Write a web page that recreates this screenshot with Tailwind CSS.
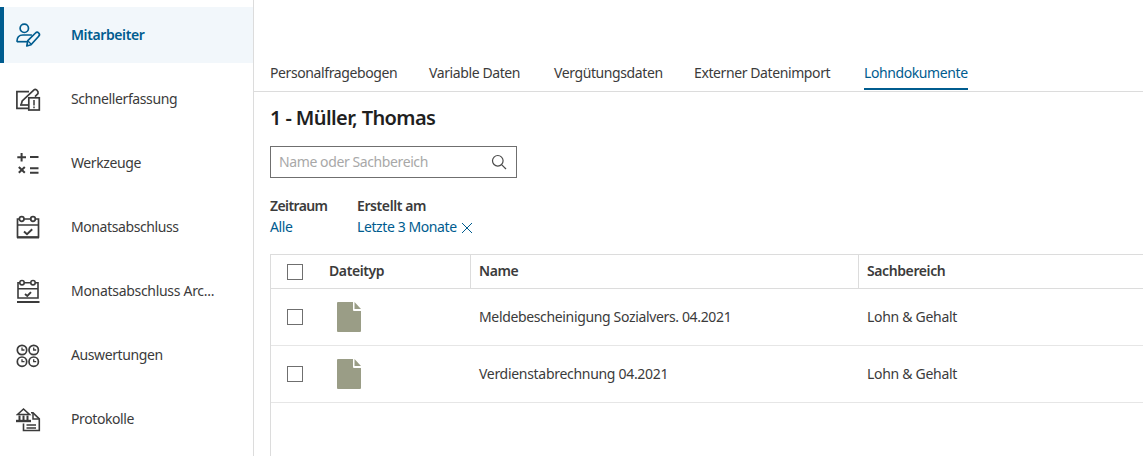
<!DOCTYPE html>
<html lang="de">
<head>
    <meta charset="UTF-8">
    <title>Lohndokumente</title>
    <script src="https://cdn.jsdelivr.net/npm/@tailwindcss/browser@4"></script>
</head>
<body class="bg-white overflow-hidden">
<div class="flex h-[456px] w-[1143px] overflow-hidden font-['Noto_Sans',sans-serif] text-[14px] tracking-[-0.4px] text-[#3b3b3b]">
    <!-- sidebar -->
    <nav class="w-[254px] shrink-0 border-r border-[#dcdcdc] pt-[7px] flex flex-col gap-2">
        <a class="h-14 shrink-0 flex items-center bg-[#f2f7fb] border-l-4 border-[#005c8f] pl-[12px] font-semibold text-[#005c8f]">
            <svg class="w-7 h-7 mr-[27px]" viewBox="0 0 28 28" fill="none" stroke="#005c8f" stroke-width="1.7"><circle cx="8.300" cy="7.300" r="4.200"/><path d="M.9 20.700c0-4 2-6.700 6-6.700h9"/><path d="M.9 20.700h10.500"/><path d="M10.800 25l1-5.300 7.700-7.700c1-1 2.200-1 3.200 0s1 2.200 0 3.200L15 23.800z" stroke-linejoin="round"/><path d="M12 20l3 3" stroke-width="1.200"/></svg>
            <span class="mb-[2px]">Mitarbeiter</span>
        </a>
        <a class="h-14 shrink-0 flex items-center pl-4">
            <svg class="w-7 h-7 mr-[27px]" viewBox="0 0 28 28" fill="none" stroke="#3b3b3b" stroke-width="1.700"><path d="M13 6.700H.9v16.600h11.400"/><path d="M5.200 19.500l1-3.500L18 4.800c1.500-1.300 4.800.8 4 3.800l-3 3"/><path d="M4 20h8.300"/><rect x="12.800" y="12.800" width="10.500" height="12.200"/><path d="M18 15v5.500M18 21.500v1.800" stroke-width="1.500"/></svg>
            <span class="mb-[2px]">Schnellerfassung</span>
        </a>
        <a class="h-14 shrink-0 flex items-center pl-4">
            <svg class="w-7 h-7 mr-[27px]" viewBox="0 0 28 28" fill="none" stroke="#3b3b3b" stroke-width="2"><path d="M5.600 4v8.600M1.300 8.300H10M14 8h8.500M2.800 18l6 5.800M8.800 18l-6 5.800M14 19.300h8.500M14 23.700h8.500"/></svg>
            <span class="mb-[2px]">Werkzeuge</span>
        </a>
        <a class="h-14 shrink-0 flex items-center pl-4">
            <svg class="w-7 h-7 mr-[27px]" viewBox="0 0 28 28" fill="none" stroke="#3b3b3b" stroke-width="1.700"><path d="M3.400 6H1.500v18h21V6h-3M8 6h7.400M1.500 12h21"/><circle cx="5.700" cy="6" r="2.300"/><circle cx="17" cy="6" r="2.300"/><path d="M8 18.500l3 2.800 5.200-5" stroke-width="1.900"/><path d="M1 24.500h22" stroke-width="2"/></svg>
            <span class="mb-[2px]">Monatsabschluss</span>
        </a>
        <a class="h-14 shrink-0 flex items-center pl-4">
            <svg class="w-7 h-7 mr-[27px]" viewBox="0 0 28 28" fill="none" stroke="#3b3b3b" stroke-width="1.600"><path d="M4 5.700H2v15.300h20V5.700h-3M8 5.700h7M2 11.700h20"/><circle cx="6" cy="5.700" r="2.200"/><circle cx="17" cy="5.700" r="2.200"/><path d="M9 17l2.300 2 3.700-3.800" stroke-width="1.900"/><path d="M1 25h22.500" stroke-width="2"/></svg>
            <span class="mb-[2px] whitespace-nowrap tracking-[-0.3px]">Monatsabschluss Arc...</span>
        </a>
        <a class="h-14 shrink-0 flex items-center pl-4">
            <svg class="w-7 h-7 mr-[27px]" viewBox="0 0 28 28" fill="none" stroke="#3b3b3b" stroke-width="1.700"><circle cx="6" cy="9" r="4.700"/><circle cx="17.700" cy="9" r="4.700"/><circle cx="6" cy="20.700" r="4.700"/><circle cx="17.700" cy="20.700" r="4.700"/><path d="M6 6.500V9h2.500M17.700 6.500V9h2.500M6 18.200v2.500h2.500M17.700 18.200v2.500h2.500" stroke-width="1.300"/></svg>
            <span class="mb-[2px]">Auswertungen</span>
        </a>
        <a class="h-14 shrink-0 flex items-center pl-4">
            <svg class="w-7 h-7 mr-[27px]" viewBox="0 0 28 28" fill="none" stroke="#3b3b3b" stroke-width="1.600"><path d="M1.500 9.500L7.500 4l6 5.500z"/><path d="M3.500 10.500v4.500M7.500 10.500v4.500M11.500 10.500v4.500" stroke-width="2"/><path d="M0 16h15" stroke-width="2.400"/><path d="M15 7.800h2l6.300 6V25.500H7.500v-7"/><path d="M17 7.800V14h6.300M10.500 20h9.500M10.500 23h9.500" stroke-width="1.500"/></svg>
            <span class="mb-[2px]">Protokolle</span>
        </a>
    </nav>

    <!-- main -->
    <main class="flex-1 min-w-0">
        <div class="h-[92px] border-b border-[#dcdcdc] pl-4 flex gap-8 items-end">
            <a class="h-[29px] w-[127px] whitespace-nowrap">Personalfragebogen</a>
            <a class="h-[29px] w-[93px] whitespace-nowrap">Variable Daten</a>
            <a class="h-[29px] w-[108px] whitespace-nowrap">Vergütungsdaten</a>
            <a class="h-[29px] w-[138px] whitespace-nowrap">Externer Datenimport</a>
            <a class="h-[29px] w-[104px] whitespace-nowrap text-[#005c8f] relative">Lohndokumente<span class="absolute left-0 right-0 bottom-[1px] h-[2px] bg-[#005c8f]"></span></a>
        </div>
        <div class="pl-4">
            <h1 class="mt-[12px] h-[28px] leading-[28px] text-[20px] font-semibold tracking-[-0.6px] text-[#1f1f1f]">1 - Müller, Thomas</h1>
            <div class="mt-[14px] w-[247px] h-8 border border-[#6f6f6f] flex items-center justify-between pl-2 pr-[9px]">
                <span class="text-[#a8a8a8] mb-[1px]">Name oder Sachbereich</span>
                <svg class="w-4 h-4" viewBox="0 0 16 16" fill="none" stroke="#4a4a4a" stroke-width="1.200"><circle cx="6.800" cy="6.800" r="5.300"/><path d="M10.800 10.800L15 15"/></svg>
            </div>
            <div class="mt-[17px] flex gap-[30px] leading-[21px]">
                <div class="w-[57px]">
                    <div class="font-semibold whitespace-nowrap tracking-[-0.6px]">Zeitraum</div>
                    <div class="text-[#005c8f]">Alle</div>
                </div>
                <div>
                    <div class="font-semibold">Erstellt am</div>
                    <div class="text-[#005c8f] flex items-center gap-1">Letzte 3 Monate
                        <svg class="w-3 h-3 mt-[2px]" viewBox="0 0 12 12" fill="none" stroke="#005c8f" stroke-width="1"><path d="M1 1l10 10M11 1L1 11"/></svg>
                    </div>
                </div>
            </div>
            <div class="mt-[17px] border-l border-t border-[#dcdcdc] h-[210px]">
                <div class="h-[34px] flex items-center border-b border-[#dcdcdc] font-semibold">
                    <div class="w-[58px] pl-4 shrink-0"><span class="block w-4 h-4 border border-[#6f6f6f]"></span></div>
                    <div class="w-[142px] h-full shrink-0 flex items-center pb-[2px] border-r border-[#dcdcdc]">Dateityp</div>
                    <div class="w-[388px] h-full shrink-0 flex items-center pl-2 pb-[2px] border-r border-[#dcdcdc]">Name</div>
                    <div class="pl-2 pb-[2px]">Sachbereich</div>
                </div>
                <div class="h-[57px] flex items-center border-b border-[#e6e6e6]">
                    <div class="w-[58px] pl-4 shrink-0"><span class="block w-4 h-4 border border-[#6f6f6f]"></span></div>
                    <div class="w-[142px] shrink-0 pl-2">
                        <svg class="w-6 h-[30px]" viewBox="0 0 24 30"><path d="M0 1a1 1 0 0 1 1-1h15v8a1 1 0 0 0 1 1h7v20a1 1 0 0 1-1 1H1a1 1 0 0 1-1-1z" fill="#9a9d86"/><path d="M17.500 0L24 7h-6.500z" fill="#9a9d86"/></svg>
                    </div>
                    <div class="w-[388px] shrink-0 pl-2 pb-[2px] tracking-[-0.35px]">Meldebescheinigung Sozialvers. 04.2021</div>
                    <div class="pl-2 pb-[2px] tracking-[-0.3px]">Lohn &amp; Gehalt</div>
                </div>
                <div class="h-[57px] flex items-center border-b border-[#e6e6e6]">
                    <div class="w-[58px] pl-4 shrink-0"><span class="block w-4 h-4 border border-[#6f6f6f]"></span></div>
                    <div class="w-[142px] shrink-0 pl-2">
                        <svg class="w-6 h-[30px]" viewBox="0 0 24 30"><path d="M0 1a1 1 0 0 1 1-1h15v8a1 1 0 0 0 1 1h7v20a1 1 0 0 1-1 1H1a1 1 0 0 1-1-1z" fill="#9a9d86"/><path d="M17.500 0L24 7h-6.500z" fill="#9a9d86"/></svg>
                    </div>
                    <div class="w-[388px] shrink-0 pl-2 pb-[2px] tracking-[-0.3px]">Verdienstabrechnung 04.2021</div>
                    <div class="pl-2 pb-[2px] tracking-[-0.3px]">Lohn &amp; Gehalt</div>
                </div>
            </div>
        </div>
    </main>
</div>
</body>
</html>
